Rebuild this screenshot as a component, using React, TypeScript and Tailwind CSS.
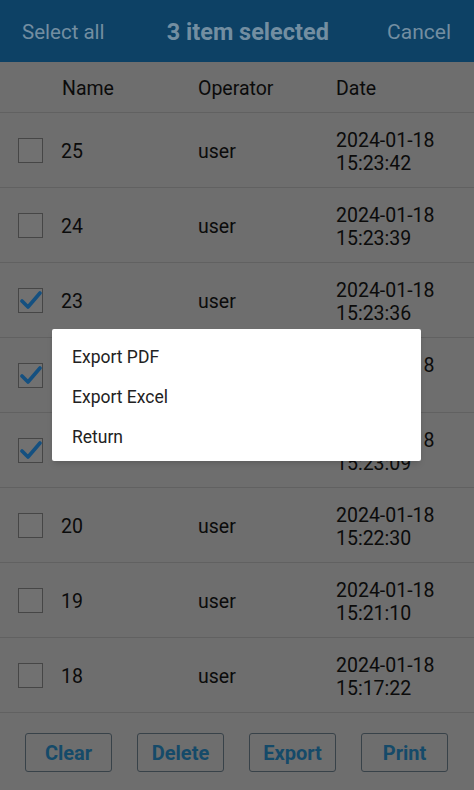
import { FunctionComponent } from "react";

type Row = { name: string; date: string; time: string; checked: boolean };

const rows: Row[] = [
  { name: "25", date: "2024-01-18", time: "15:23:42", checked: false },
  { name: "24", date: "2024-01-18", time: "15:23:39", checked: false },
  { name: "23", date: "2024-01-18", time: "15:23:36", checked: true },
  { name: "22", date: "2024-01-18", time: "15:23:12", checked: true },
  { name: "21", date: "2024-01-18", time: "15:23:09", checked: true },
  { name: "20", date: "2024-01-18", time: "15:22:30", checked: false },
  { name: "19", date: "2024-01-18", time: "15:21:10", checked: false },
  { name: "18", date: "2024-01-18", time: "15:17:22", checked: false },
];

const CheckBox: FunctionComponent<{ checked: boolean }> = ({ checked }) => (
  <div className="w-[25px] h-[25px] border-[1.5px] border-[#464646] bg-[#717171] flex items-center justify-center shrink-0">
    {checked && (
      <svg width="22" height="20" viewBox="0 0 22 20">
        <path d="M2 11 L8 17 L20 3" fill="none" stroke="#145080" strokeWidth="3.6" strokeLinecap="round" strokeLinejoin="round" />
      </svg>
    )}
  </div>
);

const App: FunctionComponent = () => {
  return (
    <div className="relative w-[474px] h-[790px] overflow-hidden bg-[#6e6e6e] font-['Roboto','Liberation_Sans',sans-serif] flex flex-col">
      {/* top bar */}
      <header className="h-[62px] bg-[#0d4165] flex items-center justify-between pl-[22px] pr-[23px] pt-[3px] text-[#738ea1] shrink-0">
        <span className="text-[20.5px]">Select all</span>
        <span className="text-[23.5px] font-bold pl-[4px]">3 item selected</span>
        <span className="text-[21px]">Cancel</span>
      </header>

      {/* column titles */}
      <div className="h-[51px] flex items-center pt-[4px] text-[19.5px] text-[#0b0b0b] border-b border-[#616161] shrink-0">
        <span className="pl-[62px] w-[198px]">Name</span>
        <span className="w-[138px]">Operator</span>
        <span>Date</span>
      </div>

      {/* list */}
      <div className="flex flex-col">
        {rows.map((r) => (
          <div key={r.name} className="h-[75px] flex items-center pt-[3px] text-[19.5px] text-[#0b0b0b] border-b border-[#616161] shrink-0">
            <div className="pl-[18px] w-[61px] -mt-[3px]">
              <CheckBox checked={r.checked} />
            </div>
            <span className="w-[137px]">{r.name}</span>
            <span className="w-[138px]">user</span>
            <div className="flex flex-col leading-[23px]">
              <span>{r.date}</span>
              <span>{r.time}</span>
            </div>
          </div>
        ))}
      </div>

      {/* bottom buttons */}
      <footer className="flex-1 flex items-start pt-[20px] pl-[25px] gap-[25px]">
        {["Clear", "Delete", "Export", "Print"].map((b) => (
          <div key={b} className="w-[87px] h-[39px] border border-[#384249] rounded-[3px] flex items-center justify-center text-[20px] font-bold text-[#154a69]">
            {b}
          </div>
        ))}
      </footer>

      {/* popup menu */}
      <div className="absolute left-[52px] top-[329px] w-[369px] h-[132px] bg-white rounded-[2px] shadow-md flex flex-col pt-[8px] text-[17.5px] text-[#222]">
        <div className="h-[40px] flex items-center pl-[20px]">Export PDF</div>
        <div className="h-[40px] flex items-center pl-[20px]">Export Excel</div>
        <div className="h-[40px] flex items-center pl-[20px]">Return</div>
      </div>
    </div>
  );
};

export default App;
